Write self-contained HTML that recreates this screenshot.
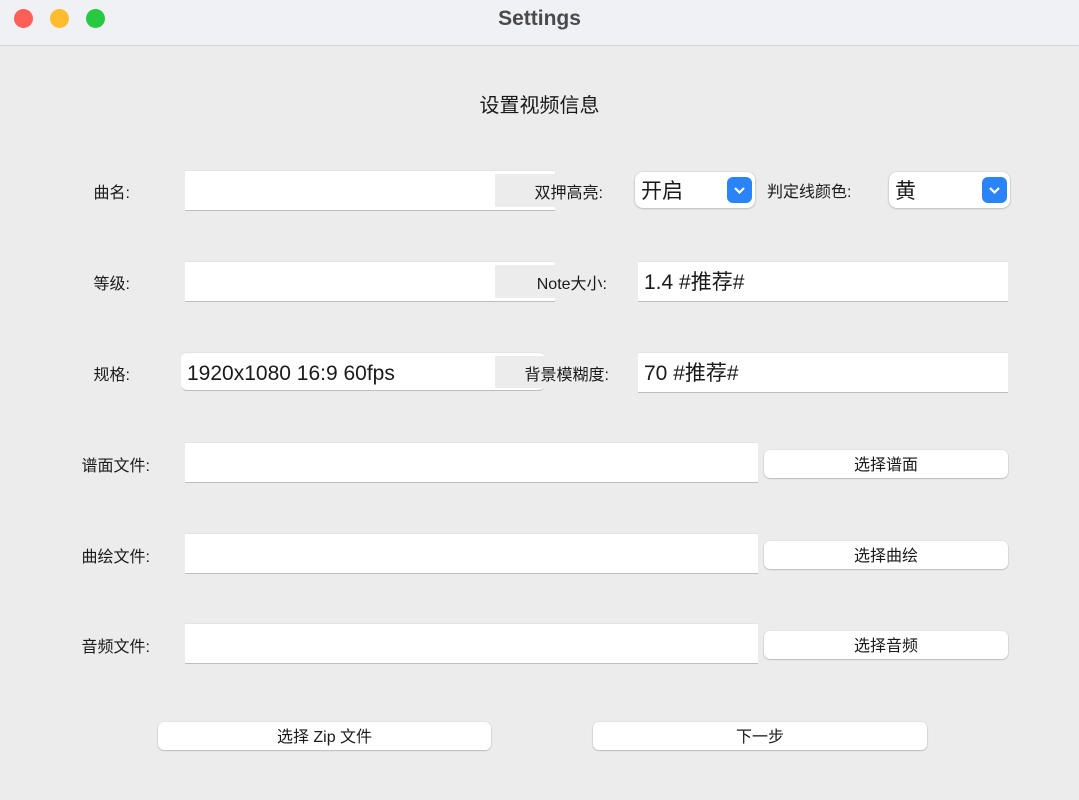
<!DOCTYPE html><html><head><meta charset="utf-8"><style>
body{margin:0;width:1079px;height:800px;background:#ececec;font-family:"Liberation Sans","Noto Sans CJK SC",sans-serif;position:relative;overflow:hidden;color:#1a1a1a}
.a{position:absolute}
.tb{left:0;top:0;width:1079px;height:45px;background:#f0f1f4;border-bottom:1px solid #d4d4d4}
.dot{top:9px;width:19px;height:19px;border-radius:50%}
.lbl{font-size:16px;text-align:right;line-height:20px}
.ent{background:#fff;border-bottom:1px solid #bdbdbd;border-top:1px solid #e4e4e4}
.btn{background:#fff;border-radius:6px;box-shadow:0 0.5px 1.5px rgba(0,0,0,.35);font-size:16px;text-align:center;line-height:32px;height:28px}
.sel{background:#fff;border-radius:8px;box-shadow:0 0.5px 2px rgba(0,0,0,.3);font-size:21px;line-height:40px;height:36px;padding-left:6px;box-sizing:border-box}
.arr{position:absolute;right:3px;top:5px;width:25px;height:26px;border-radius:6px;background:#2a84f7}
.val{font-size:21px;line-height:42px;padding-left:6px}
</style></head><body>
<div class="a tb"></div>
<div class="a dot" style="left:14px;background:#fe5f57"></div>
<div class="a dot" style="left:50px;background:#febc2e"></div>
<div class="a dot" style="left:86px;background:#28c840"></div>
<div class="a" style="left:0;width:1079px;top:7px;text-align:center;font-size:21px;font-weight:bold;color:#4a4a4a">Settings</div>
<div class="a" style="left:0;width:1079px;top:89px;text-align:center;font-size:20px">设置视频信息</div>

<div class="a lbl" style="right:949px;top:184px">曲名:</div>
<div class="a ent" style="left:185px;top:170px;width:370px;height:39px"></div>
<div class="a" style="left:495px;top:174px;width:60px;height:33px;background:#ececec"></div>
<div class="a lbl" style="right:476px;top:184px">双押高亮:</div>
<div class="a sel" style="left:635px;top:172px;width:120px">开启<div class="arr"><svg width="25" height="26"><path d="M8 11l4.5 4.5L17 11" stroke="#fff" stroke-width="2.2" fill="none"/></svg></div></div>
<div class="a lbl" style="left:767px;top:183px">判定线颜色:</div>
<div class="a sel" style="left:889px;top:172px;width:121px">黄<div class="arr"><svg width="25" height="26"><path d="M8 11l4.5 4.5L17 11" stroke="#fff" stroke-width="2.2" fill="none"/></svg></div></div>

<div class="a lbl" style="right:949px;top:275px">等级:</div>
<div class="a ent" style="left:185px;top:261px;width:370px;height:39px"></div>
<div class="a" style="left:495px;top:265px;width:60px;height:33px;background:#ececec"></div>
<div class="a lbl" style="right:472px;top:275px">Note大小:</div>
<div class="a ent val" style="left:638px;top:261px;width:364px;height:39px">1.4 #推荐#</div>

<div class="a lbl" style="right:949px;top:366px">规格:</div>
<div class="a ent val" style="left:181px;top:352px;width:358px;height:37px;border-radius:6px;line-height:42px">1920x1080 16:9 60fps</div>
<div class="a" style="left:495px;top:356px;width:50px;height:32px;background:#ececec"></div>
<div class="a lbl" style="right:470px;top:366px">背景模糊度:</div>
<div class="a ent val" style="left:638px;top:352px;width:364px;height:39px">70 #推荐#</div>

<div class="a lbl" style="right:929px;top:457px">谱面文件:</div>
<div class="a ent" style="left:185px;top:442px;width:573px;height:39px"></div>
<div class="a btn" style="left:764px;top:450px;width:244px">选择谱面</div>

<div class="a lbl" style="right:929px;top:548px">曲绘文件:</div>
<div class="a ent" style="left:185px;top:533px;width:573px;height:39px"></div>
<div class="a btn" style="left:764px;top:541px;width:244px">选择曲绘</div>

<div class="a lbl" style="right:929px;top:638px">音频文件:</div>
<div class="a ent" style="left:185px;top:623px;width:573px;height:39px"></div>
<div class="a btn" style="left:764px;top:631px;width:244px">选择音频</div>

<div class="a btn" style="left:158px;top:722px;width:333px">选择 Zip 文件</div>
<div class="a btn" style="left:593px;top:722px;width:334px">下一步</div>
</body></html>
